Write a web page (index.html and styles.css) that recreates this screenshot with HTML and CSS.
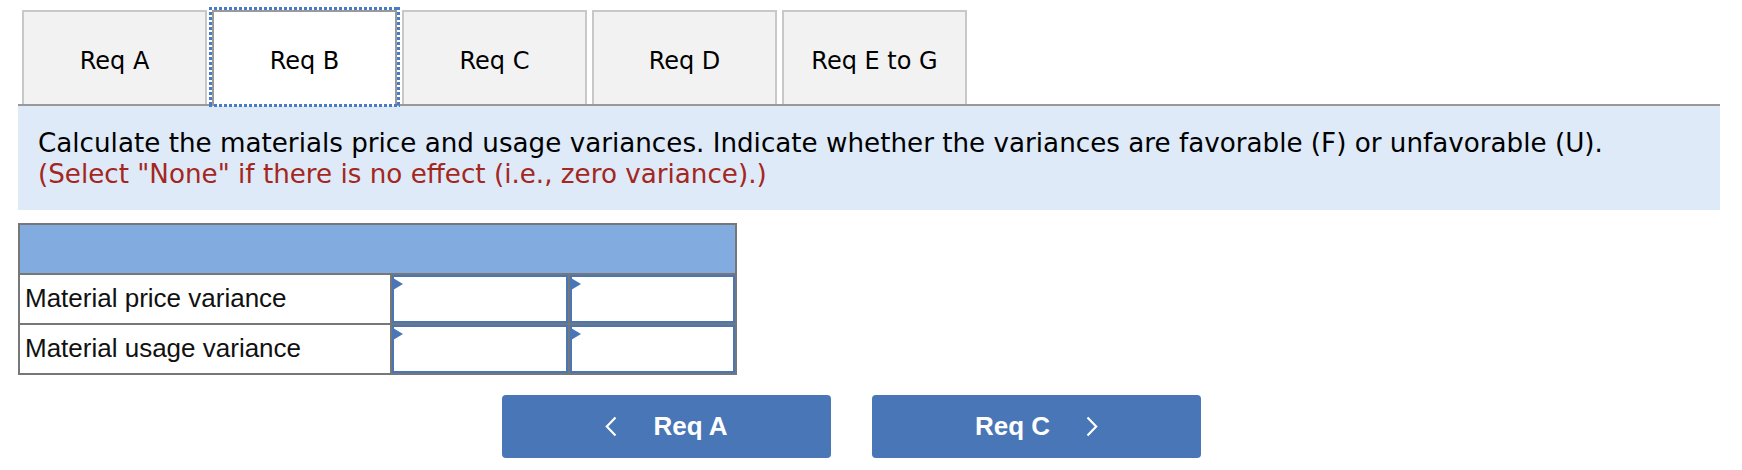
FILE: index.html
```html
<!DOCTYPE html>
<html lang="en">
<head>
<meta charset="utf-8">
<title>Req B</title>
<link rel="stylesheet" href="styles.css">
</head>
<body>
<div class="page">
  <nav class="tabs">
    <div class="tab">Req A</div>
    <div class="tab active">Req B</div>
    <div class="tab">Req C</div>
    <div class="tab">Req D</div>
    <div class="tab">Req E to G</div>
  </nav>
  <section class="prompt">
    <p class="line">Calculate the materials price and usage variances. Indicate whether the variances are favorable (F) or unfavorable (U).</p>
    <p class="line note">(Select "None" if there is no effect (i.e., zero variance).)</p>
  </section>
  <table class="var-table">
    <colgroup>
      <col class="c-label">
      <col class="c-in1">
      <col class="c-in2">
    </colgroup>
    <thead>
      <tr><th class="head" colspan="3"></th></tr>
    </thead>
    <tbody>
      <tr>
        <td class="label">Material price variance</td>
        <td class="cell"><div class="inbox"></div></td>
        <td class="cell"><div class="inbox"></div></td>
      </tr>
      <tr>
        <td class="label">Material usage variance</td>
        <td class="cell"><div class="inbox"></div></td>
        <td class="cell"><div class="inbox"></div></td>
      </tr>
    </tbody>
  </table>
  <div class="navbtns">
    <button class="nbtn"><svg class="chev" width="12" height="21" viewBox="0 0 12 21"><polyline points="10.5,1.5 1.8,10.5 10.5,19.5" fill="none" stroke="#fff" stroke-width="2.2"/></svg><span>Req A</span></button>
    <button class="nbtn"><span>Req C</span><svg class="chev" width="12" height="21" viewBox="0 0 12 21"><polyline points="1.5,1.5 10.2,10.5 1.5,19.5" fill="none" stroke="#fff" stroke-width="2.2"/></svg></button>
  </div>
</div>
</body>
</html>
```

FILE: styles.css
```css
* { box-sizing: border-box; }
html, body { margin: 0; padding: 0; background: #fff; }
.page { padding-top: 10px; }

.tabs {
  display: flex;
  gap: 5px;
  margin-left: 22px;
}
.tab {
  position: relative;
  width: 185px;
  height: 94px;
  border: 2px solid #c8c8c8;
  border-bottom: none;
  background: #f2f2f2;
  display: flex;
  align-items: center;
  justify-content: center;
  padding-top: 5px;
  font-family: "DejaVu Sans", Verdana, sans-serif;
  font-size: 24px;
  color: #000;
}
.tab.active {
  background: #fff;
  border-color: #999;
  height: 96px;
  margin-bottom: -2px;
  padding-top: 4px;
  padding-bottom: 1px;
  z-index: 2;
}
.tab.active::after {
  content: "";
  position: absolute;
  top: -5px; left: -5px; right: -5px; bottom: -1px;
  background:
    repeating-linear-gradient(90deg, #4a7bc6 0 3px, transparent 3px 5px) top left / 100% 3px no-repeat,
    repeating-linear-gradient(90deg, #4a7bc6 0 3px, transparent 3px 5px) bottom left / 100% 3px no-repeat,
    repeating-linear-gradient(180deg, #4a7bc6 0 3px, transparent 3px 5px) top left / 3px 100% no-repeat,
    repeating-linear-gradient(180deg, #4a7bc6 0 3px, transparent 3px 5px) top right / 3px 100% no-repeat;
}

.prompt {
  margin-left: 18px;
  width: 1702px;
  background: #deeaf7;
  border-top: 2px solid #999;
  padding: 22px 20px 20px 20px;
  font-family: "DejaVu Sans", Verdana, sans-serif;
  font-size: 26.2px;
  line-height: 31px;
  color: #000;
}
.prompt .line { margin: 0; white-space: nowrap; }
.prompt .note { color: #a4271f; }

.var-table {
  margin: 13px 0 0 18px;
  border-collapse: separate;
  border-spacing: 0;
  table-layout: fixed;
  width: 719px;
  border-top: 2px solid #777;
  border-left: 2px solid #777;
  font-family: "Liberation Sans", Arial, sans-serif;
  font-size: 26px;
  color: #111;
}
.c-label { width: 372px; }
.c-in1 { width: 178px; }
.c-in2 { width: 167px; }
.var-table th, .var-table td {
  padding: 0;
  border-right: 2px solid #777;
  border-bottom: 2px solid #777;
  height: 50px;
}
.var-table .head { background: #82abdf; }
.var-table .label {
  padding-left: 5px;
  padding-bottom: 2px;
  font-weight: normal;
  white-space: nowrap;
}
.var-table .cell { vertical-align: top; }
.inbox {
  position: relative;
  height: 48px;
  border: 2px solid #4876b6;
  background: #fff;
}
.inbox::before {
  content: "";
  position: absolute;
  left: -1px;
  top: 1px;
  border-left: 10px solid #4876b6;
  border-top: 6px solid transparent;
  border-bottom: 6px solid transparent;
}

.navbtns {
  display: flex;
  gap: 41px;
  margin: 20px 0 0 502px;
}
.nbtn {
  width: 329px;
  height: 63px;
  border: none;
  border-radius: 4px;
  background: #4876b6;
  color: #fff;
  display: flex;
  align-items: center;
  justify-content: center;
  gap: 36px;
  padding: 0;
  font-family: "Liberation Sans", Arial, sans-serif;
  font-weight: bold;
  font-size: 26px;
}
.chev { display: block; }
```
